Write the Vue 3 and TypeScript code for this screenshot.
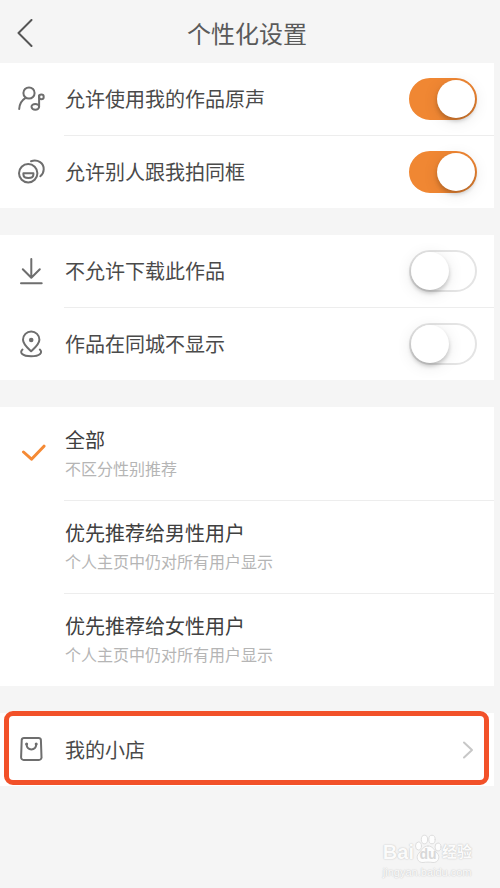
<script setup lang="ts">
import { ref } from 'vue'

interface Toggle {
  id: string
  label: string
  on: boolean
}

interface Audience {
  value: string
  title: string
  note: string
}

const toggleGroups = ref<Toggle[][]>([
  [
    { id: 'sound', label: '允许使用我的作品原声', on: true },
    { id: 'duet', label: '允许别人跟我拍同框', on: true },
  ],
  [
    { id: 'download', label: '不允许下载此作品', on: false },
    { id: 'city', label: '作品在同城不显示', on: false },
  ],
])

const audiences: Audience[] = [
  { value: 'all', title: '全部', note: '不区分性别推荐' },
  { value: 'male', title: '优先推荐给男性用户', note: '个人主页中仍对所有用户显示' },
  { value: 'female', title: '优先推荐给女性用户', note: '个人主页中仍对所有用户显示' },
]

const audience = ref('all')
</script>

<template>
  <div class="page">
    <header class="bar">
      <button class="back" type="button" aria-label="返回">
        <svg width="16" height="28" viewBox="0 0 16 28"><path d="M14.500 1 1.500 14l13 13" /></svg>
      </button>
      <h1>个性化设置</h1>
    </header>

    <main>
      <section v-for="(group, index) in toggleGroups" :key="index" class="group">
        <label v-for="item in group" :key="item.id" class="row" :for="item.id">
          <span class="lead">
            <svg v-if="item.id === 'sound'" class="icon" viewBox="0 0 28 28">
              <circle cx="11" cy="8" r="5.600" />
              <path d="M1.200 24C1.400 19 3.700 15.200 7.600 12.800" />
              <ellipse cx="17.300" cy="21.800" rx="3.800" ry="2.900" />
              <path d="M21.100 21.800V10.500" />
              <circle cx="23.400" cy="11.900" r="2.300" />
            </svg>
            <svg v-else-if="item.id === 'duet'" class="icon" viewBox="0 0 28 28">
              <circle cx="10.200" cy="15.300" r="9.200" />
              <path d="M5.400 15.300h10v1.200c0 2.200-2.200 3.500-5 3.500s-5-1.300-5-3.500z" />
              <path d="M13 3.200C20 1 26 5.300 25.700 11.500c-.1 2.700-1.200 5-3.400 6.700" />
            </svg>
            <svg v-else-if="item.id === 'download'" class="icon" viewBox="0 0 28 28">
              <path d="M13.300 2v18.500M4.800 12.200l8.500 8.500 8.500-8.500M3 26.200h20.700" />
            </svg>
            <svg v-else class="icon" viewBox="0 0 28 28">
              <path d="M13.100 21.300C9 17.300 5 14 5 9.700a8.200 8.200 0 0 1 16.400 0c0 4.300-4.100 7.600-8.300 11.600z" />
              <circle class="dot" cx="13.200" cy="10" r="2.300" />
              <path d="M4.500 19.600c-3.300 2.800-.4 6.600 8.600 6.600s12-3.800 8.700-6.600" />
            </svg>
          </span>
          <span class="text">{{ item.label }}</span>
          <input :id="item.id" v-model="item.on" class="switch" type="checkbox" role="switch" />
        </label>
      </section>

      <section class="group" role="radiogroup" aria-label="推荐人群">
        <label v-for="item in audiences" :key="item.value" class="row tall">
          <span class="lead">
            <input v-model="audience" class="radio" type="radio" name="audience" :value="item.value" />
            <svg class="tick" width="28" height="20" viewBox="0 0 28 20"><path d="M5.500 9l8 7.200L26 3.200" /></svg>
          </span>
          <span class="choice">
            <span class="title">{{ item.title }}</span>
            <span class="note">{{ item.note }}</span>
          </span>
        </label>
      </section>

      <section class="group shop">
        <a class="row" href="#shop">
          <span class="lead">
            <svg class="icon" viewBox="0 0 28 28">
              <path d="M6 2h14.600a2.300 2.300 0 0 1 2.300 2l.6 17.200a2.600 2.600 0 0 1-2.600 2.800H5.700a2.600 2.600 0 0 1-2.600-2.800L3.700 4A2.300 2.300 0 0 1 6 2z" />
              <path d="M8.600 8.300c0 3 2 5.100 4.800 5.100s4.800-2.100 4.800-5.100" />
              <circle class="dot" cx="8.600" cy="8" r="1.500" />
              <circle class="dot" cx="18.200" cy="8" r="1.500" />
            </svg>
          </span>
          <span class="text">我的小店</span>
          <svg class="chevron" width="12" height="18" viewBox="0 0 12 18"><path d="M2 1.500 10 9l-8 7.500" /></svg>
        </a>
      </section>
    </main>

    <footer class="mark">
      <div class="brand">
        <span>Bai</span>
        <span class="paw">
          <svg width="28" height="30" viewBox="0 0 28 30">
            <ellipse cx="4.500" cy="12" rx="3" ry="4" />
            <ellipse cx="10.500" cy="5.500" rx="3.200" ry="4.300" />
            <ellipse cx="18" cy="5.500" rx="3.200" ry="4.300" />
            <ellipse cx="24" cy="13" rx="3" ry="4" />
            <path d="M14 12c5 0 6 4 9 7 4 4 1 10-4 9.500-3-.5-7-.5-10 0-5 .5-8-5.500-4-9.500 3-3 4-7 9-7z" />
          </svg>
          <span class="du">du</span>
        </span>
        <span class="exp">经验</span>
      </div>
      <div class="site">jingyan.baidu.com</div>
    </footer>
  </div>
</template>

<style>
body {
  background: #f5f5f5;
}
</style>

<style scoped>
.page {
  box-sizing: border-box;
  min-height: 100vh;
  padding-right: 6px;
  display: flex;
  flex-direction: column;
  background: #f5f5f5;
  color: #4a4a4a;
  font-family: "Noto Sans CJK SC", sans-serif;
}

svg {
  display: block;
  fill: none;
  stroke: #6e6e6e;
  stroke-width: 2;
  stroke-linecap: round;
  stroke-linejoin: round;
}

.bar {
  display: grid;
  grid-template-columns: 64px 1fr 64px;
  align-items: center;
  height: 63px;
  padding-top: 2px;
  box-sizing: border-box;
}

.back {
  justify-self: start;
  padding: 0 0 0 17px;
  border: 0;
  background: none;
}

.back svg {
  stroke: #555;
}

h1 {
  margin: 0;
  text-align: center;
  font-size: 24px;
  line-height: 32px;
  font-weight: 400;
  color: #5a5a5a;
}

main {
  display: flex;
  flex-direction: column;
  gap: 27px;
}

.group {
  background: #fff;
}

.row {
  position: relative;
  display: flex;
  align-items: center;
  min-height: 72px;
  padding-right: 17px;
  color: inherit;
  text-decoration: none;
}

.row + .row {
  padding-top: 1px;
}

.row.tall {
  box-sizing: border-box;
  min-height: 93px;
  padding-top: 0;
  padding-bottom: 1px;
}

.row + .row::before {
  content: "";
  position: absolute;
  top: 0;
  left: 64px;
  right: 0;
  height: 1px;
  background: #ededed;
}

.lead {
  flex: none;
  width: 65px;
  padding-left: 18px;
  box-sizing: border-box;
}

.icon {
  width: 28px;
  height: 28px;
}

.dot {
  fill: #6e6e6e;
  stroke: none;
}

.text {
  flex: 1;
  font-size: 20px;
  line-height: 28px;
}

.switch {
  appearance: none;
  flex: none;
  position: relative;
  width: 68px;
  height: 42px;
  margin: 0;
  border: 2px solid #e4e4e4;
  border-radius: 21px;
  background: #fff;
}

.switch::before {
  content: "";
  position: absolute;
  top: 0;
  left: 0;
  width: 38px;
  height: 38px;
  border-radius: 50%;
  background: #fff;
  box-shadow: 0 3px 4px rgba(0, 0, 0, 0.2), 0 3px 16px rgba(0, 0, 0, 0.1);
}

.switch:checked {
  border-color: #f08733;
  background: #f08733;
}

.switch:checked::before {
  left: 26px;
}

.radio {
  position: absolute;
  width: 28px;
  height: 28px;
  margin: 0;
  opacity: 0;
}

.tick {
  visibility: hidden;
  stroke: #f58a35;
  stroke-width: 3;
}

.radio:checked + .tick {
  visibility: visible;
}

.choice {
  display: flex;
  flex-direction: column;
  gap: 2px;
}

.title {
  font-size: 20px;
  line-height: 28px;
  color: #404040;
}

.note {
  font-size: 16px;
  line-height: 24px;
  color: #b5b5b5;
}

.shop {
  position: relative;
}

.shop::after {
  content: "";
  position: absolute;
  inset: -2px 5px 1px 4px;
  border: 5px solid #f25129;
  border-radius: 9px;
  pointer-events: none;
}

.shop .row {
  min-height: 73px;
  padding-right: 20px;
}

.chevron {
  stroke: #c7c7c7;
}

.mark {
  align-self: flex-end;
  margin-top: auto;
  padding: 0 22px 8px 0;
  color: #fbfbfb;
  font-family: "Liberation Sans", "Noto Sans CJK SC", sans-serif;
  text-shadow: 0 0 1px #c8c8c8, 0 0 2px #d0d0d0;
}

.brand {
  display: flex;
  align-items: flex-end;
  height: 32px;
  font-size: 20px;
  line-height: 24px;
  font-weight: 700;
}

.paw {
  display: grid;
  place-items: end center;
}

.paw svg,
.du {
  grid-area: 1 / 1;
}

.paw svg {
  fill: #fdfdfd;
  stroke: #dedede;
  stroke-width: 1;
}

.du {
  font-size: 14px;
  line-height: 20px;
  color: #d8d8d8;
  text-shadow: none;
}

.exp {
  font-size: 15px;
}

.site {
  font-size: 11px;
  line-height: 16px;
}
</style>
